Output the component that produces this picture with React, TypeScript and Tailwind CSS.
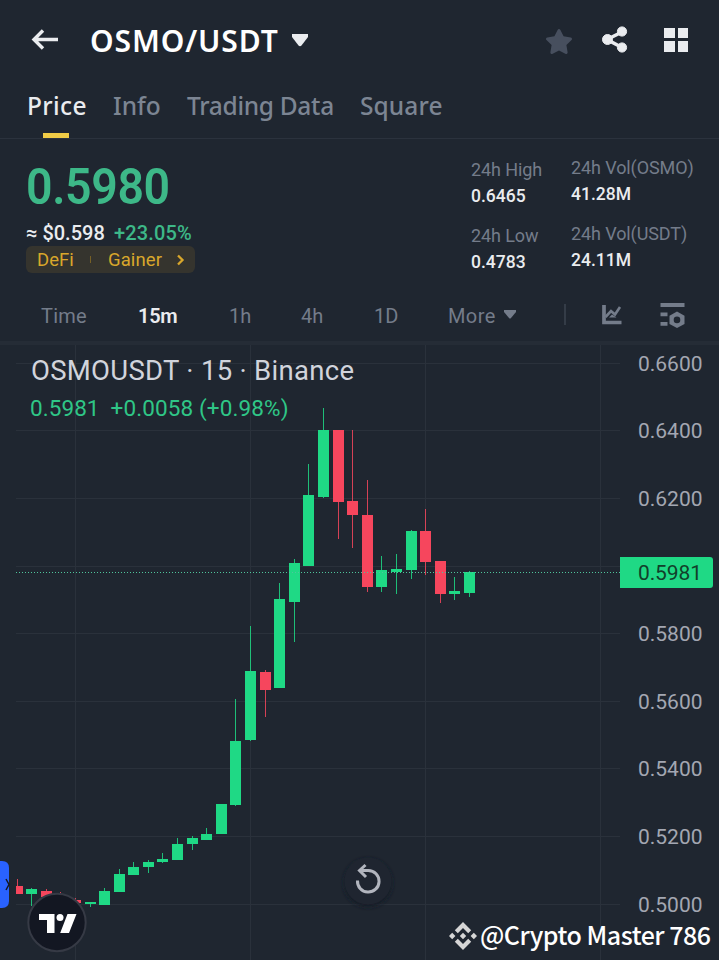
import { FaStar } from 'react-icons/fa';

type Candle = { x: number; open: number; close: number; high: number; low: number; up: boolean };

const c = (x: number, open: number, close: number, high: number, low: number, up = true): Candle => ({
  x,
  open,
  close,
  high,
  low,
  up,
});

const candles: Candle[] = [
  c(12, 886, 894, 879, 894, false),
  c(26, 889, 894, 888, 906),
  c(41, 891, 897, 889, 897, false),
  c(55, 895, 899, 892, 899, false),
  c(70, 900, 903, 898, 903, false),
  c(85, 902, 904, 902, 907),
  c(99, 891, 905, 888, 905),
  c(114, 874, 892, 869, 892),
  c(128, 867, 875, 862, 875),
  c(143, 862, 867, 860, 873),
  c(157, 859, 862, 853, 863),
  c(172, 844, 860, 838, 860),
  c(187, 838, 844, 836, 850),
  c(201, 834, 840, 828, 840),
  c(216, 804, 834, 804, 834),
  c(230, 741, 805, 699, 806),
  c(245, 671, 740, 626, 741),
  c(260, 672, 690, 670, 717, false),
  c(274, 599, 688, 583, 688),
  c(289, 563, 602, 559, 642),
  c(303, 495, 566, 464, 566),
  c(318, 430, 497, 408, 498),
  c(333, 430, 502, 430, 539, false),
  c(347, 501, 515, 430, 548, false),
  c(362, 515, 587, 480, 592, false),
  c(376, 570, 587, 556, 592),
  c(391, 569, 572, 554, 594),
  c(406, 531, 570, 530, 579),
  c(420, 531, 562, 509, 575, false),
  c(435, 561, 594, 561, 603, false),
  c(449, 591, 594, 577, 600),
  c(464, 572, 593, 571, 597),
];

const prices = [
  { y: 363, label: '0.6600' },
  { y: 430, label: '0.6400' },
  { y: 498, label: '0.6200' },
  { y: 566, label: '' },
  { y: 633, label: '0.5800' },
  { y: 701, label: '0.5600' },
  { y: 768, label: '0.5400' },
  { y: 836, label: '0.5200' },
  { y: 904, label: '0.5000' },
];

function Header() {
  return (
    <header className="flex h-20 items-center pl-[31px] pr-[30px]">
      <svg width="28" height="22" viewBox="0 0 28 22" fill="none" stroke="#eaecef" strokeWidth="3.4">
        <path d="M27 10.500H3M12 1.500L3 10.500l9 9" />
      </svg>
      <h1 className="ml-[31px] mt-px w-[188px] whitespace-nowrap font-['Noto_Sans'] text-[30px] font-semibold leading-none tracking-[0.9px] text-white">
        OSMO/USDT
      </h1>
      <svg className="ml-[13px]" width="18" height="13" viewBox="0 0 18 13" fill="#eaecef">
        <path d="M1 0h16v3L10.500 11.500q-1.500 1.600-3 0L1 3z" />
      </svg>
      <div className="ml-auto flex items-center">
        <FaStar className="mt-0.5 h-[27px] w-[28px] text-[#474f5e]" />
        <svg className="ml-[28px]" width="27" height="28" viewBox="0 0 27 28" fill="#eaecef" stroke="#eaecef">
          <path d="M21 6L6 13.500l15 8" fill="none" strokeWidth="3.600" />
          <circle cx="6.500" cy="13.500" r="5" />
          <circle cx="21" cy="5.500" r="4.600" />
          <circle cx="21" cy="21.500" r="4.600" />
        </svg>
        <div className="-mt-px ml-[36px] mr-px grid grid-cols-2 gap-[3px]">
          <i className="size-[10.5px] bg-[#eaecef]" />
          <i className="size-[10.5px] bg-[#eaecef]" />
          <i className="size-[10.5px] bg-[#eaecef]" />
          <i className="size-[10.5px] bg-[#eaecef]" />
        </div>
      </div>
    </header>
  );
}

function Tabs() {
  return (
    <nav className="flex h-[59px] gap-[26px] whitespace-nowrap border-b border-[#2b323d] pl-[27px] pt-[8px] font-['Noto_Sans'] text-[24.5px] font-medium leading-9 text-[#7c8593]">
      <div className="flex w-[60px] flex-col items-center justify-between text-[#eaecef]">
        <span className="tracking-[0.4px]">Price</span>
        <i className="-ml-0.5 h-[5px] w-[26px] bg-[#f0cb46]" />
      </div>
      <span className="w-[48px]">Info</span>
      <span className="w-[147px] tracking-[-0.3px]">Trading Data</span>
      <span className="tracking-[0.1px]">Square</span>
    </nav>
  );
}

function Stat({ label, value }: { label: string; value: string }) {
  return (
    <div className="h-[66px] whitespace-nowrap">
      <div className="text-[18px] leading-[26px] tracking-[-0.1px] text-[#747c8a]">{label}</div>
      <div className="text-[17.5px] font-medium leading-[26px] text-[#eaecef]">{value}</div>
    </div>
  );
}

function Summary() {
  return (
    <section className="flex h-[151px] pl-[26px] font-['Roboto']">
      <div className="w-[445px] pt-[20px]">
        <div className="w-[155px] origin-left scale-x-[0.93] text-[50px] font-semibold leading-[56px] tracking-[-0.4px] text-[#3db888]">
          0.5980
        </div>
        <div className="mt-[5px] flex text-[20px] font-medium leading-[26px]">
          <span className="w-[88px] text-[#eaecef]">≈ $0.598</span>
          <span className="tracking-[0.15px] text-[#3db888]">+23.05%</span>
        </div>
        <div className="flex h-[27px] w-[169px] items-center rounded-[6px] bg-[#35342e] pl-[11px] text-[18.5px] text-[#d9a72b]">
          <span className="mt-0.5 w-[53px]">DeFi</span>
          <i className="h-[7px] w-px bg-[#776025]" />
          <span className="ml-[17px] mt-0.5 w-[68px] tracking-[0.1px]">Gainer</span>
          <svg width="9" height="12" viewBox="0 0 9 12" fill="none" stroke="#d9a72b" strokeWidth="2.300">
            <path d="M2 1.500L6.500 6 2 10.500" />
          </svg>
        </div>
      </div>
      <div className="w-[100px] pt-[18px]">
        <Stat label="24h High" value="0.6465" />
        <Stat label="24h Low" value="0.4783" />
      </div>
      <div className="pt-4">
        <Stat label="24h Vol(OSMO)" value="41.28M" />
        <Stat label="24h Vol(USDT)" value="24.11M" />
      </div>
    </section>
  );
}

function Intervals() {
  return (
    <div className="flex h-[55px] items-center whitespace-nowrap border-b-4 border-[#252c36] pl-[41px] font-['Roboto'] text-[20px] text-[#747c8a]">
      <span className="w-[97px] tracking-[0.2px]">Time</span>
      <span className="w-[91px] font-semibold tracking-[-0.3px] text-[#eaecef]">15m</span>
      <span className="w-[72px]">1h</span>
      <span className="w-[73px]">4h</span>
      <span className="w-[74px]">1D</span>
      <span className="w-[56px] tracking-[0.4px]">More</span>
      <svg className="-mt-0.5" width="12" height="9" viewBox="0 0 12 9" fill="#747c8a">
        <path d="M0 0h12v2L7 8q-1 1-2 0L0 2z" />
      </svg>
      <i className="-mt-0.5 ml-[48px] h-[21px] w-[1.5px] bg-[#343c47]" />
      <svg className="-mt-0.5 ml-[36px]" width="20" height="20" viewBox="0 0 20 20" fill="none" stroke="#747c8a">
        <path d="M2 0v17.500H19.500" strokeWidth="3.700" />
        <path d="M3.500 12l5.500-6 4 3.500L18 2" strokeWidth="2.600" />
        <path d="M7 12.500l3-3 4.500 3z" fill="#747c8a" stroke="none" />
      </svg>
      <svg className="ml-[38px]" width="26" height="26" viewBox="0 0 26 26" fill="#747c8a">
        <path d="M.5 0h24v4H.5zM.5 9.500h7v3.700h-7zM.5 19h7v3.700h-7z" />
        <path
          fillRule="evenodd"
          d="M17 8.500l7.500 4.200v8.200L17 25l-7.500-4.100v-8.200zM17 13.600a3.300 3.300 0 100 6.600 3.300 3.300 0 000-6.600z"
        />
      </svg>
    </div>
  );
}

function Chart() {
  return (
    <svg className="block font-['Roboto']" width="719" height="615" viewBox="0 345 719 615">
      <defs>
        <clipPath id="plot">
          <rect x="16" y="345" width="604" height="615" />
        </clipPath>
        <filter id="soft" x="-30%" y="-30%" width="160%" height="160%">
          <feGaussianBlur stdDeviation="2" />
        </filter>
      </defs>

      <g stroke="#2a313b" shapeRendering="crispEdges">
        {prices.map((p) => (
          <line key={p.y} x1="16" x2="620" y1={p.y + 0.5} y2={p.y + 0.5} />
        ))}
        {[75, 250, 425, 600].map((x) => (
          <line key={x} x1={x + 0.5} x2={x + 0.5} y1="345" y2="960" />
        ))}
      </g>

      <g clipPath="url(#plot)">
        {candles.map((k) => (
          <g key={k.x} fill={k.up ? '#1fd985' : '#f6465d'}>
            <rect x={k.x + 5} y={k.high} width="1" height={k.low - k.high} opacity="0.85" />
            <rect x={k.x} y={k.open} width="11" height={k.close - k.open} />
          </g>
        ))}
      </g>

      <line x1="16" x2="620" y1="572.5" y2="572.5" stroke="#4fc59c" strokeDasharray="1 2" />

      <text x="31" y="380" fontSize="27.5" fill="#d1d4dc" textLength="323">
        OSMOUSDT · 15 · Binance
      </text>
      <g fontSize="22.500" fill="#2fc687">
        <text x="30" y="416" textLength="69.500">0.5981</text>
        <text x="110.500" y="416" textLength="178">+0.0058 (+0.98%)</text>
      </g>

      <g fontSize="21" fill="#a3a7b2">
        {prices.map((p) => (
          <text key={p.y} x="638" y={p.y + 8} textLength={p.label ? 64.5 : undefined}>
            {p.label}
          </text>
        ))}
      </g>
      <path d="M620 557h90q3 0 3 3v25q0 3-3 3h-90z" fill="#1fd985" />
      <text x="638" y="580" fontSize="21" fill="#123f2a" textLength="64">0.5981</text>

      {/* side drawer handle */}
      <path d="M0 861h2q7 0 7 7v33q0 7-7 7H0z" fill="#2962ff" />
      <path d="M6 879l3 5.500-3 5.500" fill="none" stroke="#131722" strokeWidth="1.500" />

      {/* chart provider logo */}
      <circle cx="57" cy="922.500" r="28.700" fill="#131722" stroke="#363a45" strokeWidth="2" />
      <g fill="#fff">
        <path d="M39 914h15.500v19H47v-13h-8zM67.500 914h9L69 933h-8.800z" />
        <circle cx="60" cy="917.500" r="3.500" />
      </g>

      {/* reset view */}
      <circle cx="368" cy="883" r="24" fill="#181e27" filter="url(#soft)" />
      <circle cx="368" cy="881" r="23.500" fill="#1f2530" />
      <g fill="none" stroke="#b2b5be" strokeWidth="3">
        <path d="M357.500 880.500A10.800 10.800 0 10368.300 870.500H360" />
        <path d="M365.500 865l-6 5.500 6.500 6.500" />
      </g>

      {/* author signature */}
      <g fill="#d6d6d6">
        <path d="M463 922l8.200 8.200-3 3-5.200-5.200-5.200 5.200-3-3zM463 950l-8.200-8.200 3-3 5.200 5.200 5.200-5.200 3 3z" />
        <path d="M452.200 932.800l3.200 3.200-3.200 3.200-3.200-3.200zM463 932.800l3.200 3.200-3.200 3.200-3.200-3.200zM473.800 932.800l3.200 3.200-3.200 3.200-3.200-3.200z" />
      </g>
      <text className="font-['Noto_Sans_CJK_SC']" x="480" y="945" fontSize="25" fontWeight="500" fill="#fff" textLength="231">
        @Crypto Master 786
      </text>
    </svg>
  );
}

export default function App() {
  return (
    <main className="h-[960px] w-[719px] overflow-hidden bg-[#1f2630]">
      <Header />
      <Tabs />
      <Summary />
      <Intervals />
      <Chart />
    </main>
  );
}
